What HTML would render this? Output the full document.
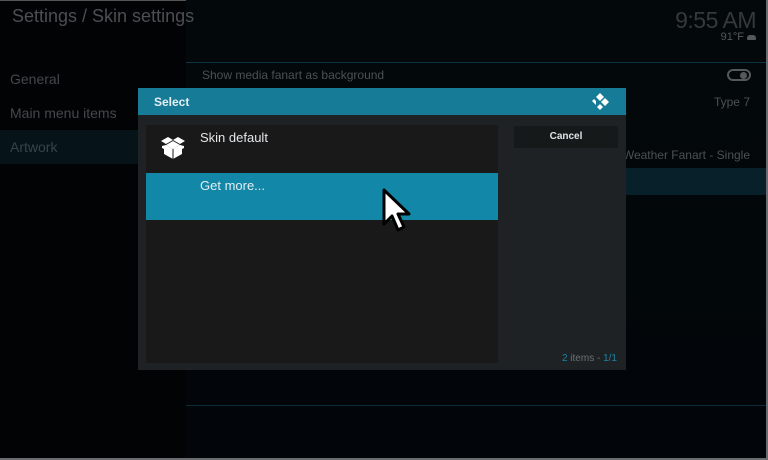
<!DOCTYPE html>
<html><head><style>
*{margin:0;padding:0;box-sizing:border-box}
body{width:768px;height:460px;background:#020304;position:relative;overflow:hidden;font-family:"Liberation Sans",sans-serif;}
.a{position:absolute}
</style></head><body>
<div class="a" style="left:0;top:0;width:768px;height:1px;background:#555"></div>
<div class="a" style="left:186px;top:0;width:582px;height:460px;background:linear-gradient(#03080b,#02060a)"></div>
<div class="a" style="left:186px;top:62px;width:582px;height:1px;background:#0e3342"></div>
<div class="a" style="left:186px;top:405px;width:582px;height:1px;background:#0c2c38"></div>
<div class="a" style="left:12px;top:6px;font-size:18px;color:#4c4f52;">Settings / Skin settings</div>
<div class="a" style="right:12px;top:7px;font-size:23px;color:#36393c;letter-spacing:-0.5px">9:55 AM</div>
<div class="a" style="right:24px;top:31px;font-size:11px;color:#55585b;">91°F</div>
<div class="a" style="left:747px;top:35px;width:9px;height:5px;background:#55585b;border-radius:3px 3px 1px 1px"></div>
<div class="a" style="left:10px;top:71px;font-size:14px;color:#44484b">General</div>
<div class="a" style="left:10px;top:105px;font-size:14px;color:#44484b">Main menu items</div>
<div class="a" style="left:0;top:130px;width:186px;height:34px;background:#061419"></div>
<div class="a" style="left:10px;top:139px;font-size:14px;color:#37434a">Artwork</div>
<div class="a" style="left:202px;top:68px;font-size:12px;color:#4c5155">Show media fanart as background</div>
<div class="a" style="left:727px;top:69px;width:24px;height:12px;border:2px solid #55595c;border-radius:6px"></div>
<div class="a" style="left:740px;top:72px;width:7px;height:7px;background:#55595c;border-radius:50%"></div>
<div class="a" style="right:18px;top:95px;font-size:12px;color:#4c5155">Type 7</div>
<div class="a" style="right:18px;top:148px;font-size:12px;color:#4c5155">Weather Fanart - Single</div>
<div class="a" style="left:626px;top:168px;width:140px;height:27px;background:#07202a"></div>
<div class="a" style="left:766px;top:0;width:2px;height:460px;background:#6a6d70"></div>
<div class="a" style="left:0;top:458px;width:768px;height:2px;background:#6a6d70"></div>

<div class="a" style="left:138px;top:88px;width:488px;height:282px;background:#1e2224"></div>
<div class="a" style="left:138px;top:88px;width:488px;height:27px;background:#157b97"></div>
<div class="a" style="left:154px;top:95px;font-size:12px;font-weight:bold;color:#e6eef2">Select</div>
<svg class="a" style="left:589px;top:91px" width="22" height="22" viewBox="0 0 22 22">
<g fill="#fff"><polygon points="11,2 15,6 11,10 7,6"/><polygon points="5,8 7,10 7,14 5,12 3,10"/><polygon points="16,7 20,11 16,15 12,11"/><polygon points="11,13 14,16 11,19 8,16"/></g></svg>
<div class="a" style="left:146px;top:125px;width:352px;height:238px;background:#19191a"></div>
<div class="a" style="left:146px;top:173px;width:352px;height:47px;background:#1287a8"></div>
<svg class="a" style="left:159px;top:136px" width="28" height="26" viewBox="0 0 28 26">
<g fill="#fff"><polygon points="2,5 9,1 14,4 7,8"/><polygon points="14,4 19,1 26,5 21,8"/><polygon points="7,9 14,5 21,9 14,13"/><polygon points="3,10 7,9 14,13 14,23 5,18 5,13 3,12"/><polygon points="25,10 21,9 14,13 14,23 23,18 23,13 25,12"/></g>
<rect x="13.5" y="13" width="1" height="10" fill="#19191a"/></svg>
<div class="a" style="left:200px;top:130px;font-size:13px;color:#e4e6e8">Skin default</div>
<div class="a" style="left:200px;top:178px;font-size:13px;color:#e4eef2">Get more...</div>
<div class="a" style="left:514px;top:126px;width:104px;height:22px;background:#16191a"></div>
<div class="a" style="left:514px;top:131px;width:104px;text-align:center;font-size:10px;font-weight:bold;color:#e0e4e6">Cancel</div>
<div class="a" style="right:151px;top:353px;font-size:10px;color:#6c7175"><span style="color:#1a84a6">2</span> items - <span style="color:#1a84a6">1/1</span></div>
<svg class="a" style="left:382px;top:188px" width="30" height="46" viewBox="0 0 30 46">
<polygon points="2,2 2,36 10,28 16,42 22,39 16,26 27,26" fill="#fff" stroke="#000" stroke-width="3" stroke-linejoin="round"/></svg>
</body></html>
